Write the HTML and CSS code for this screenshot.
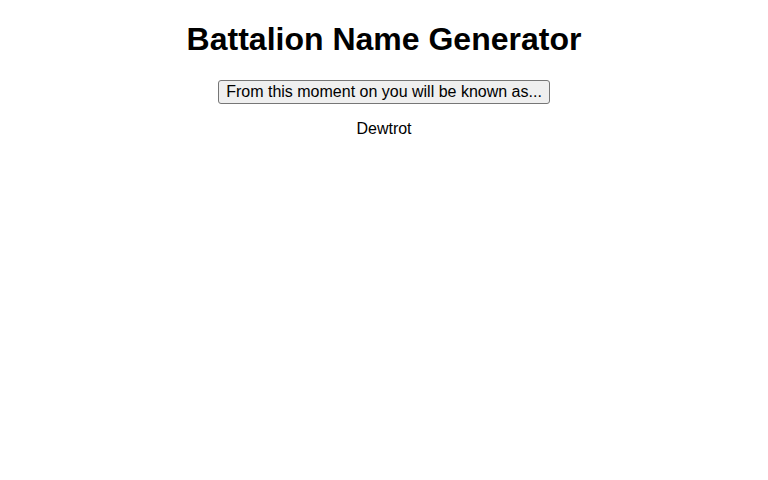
FILE: index.html
```html
<!DOCTYPE html>
<html>
  <head>
    <meta charset="utf-8">
    <title>Battalion Name Generator</title>
    <link rel="stylesheet" href="styles.css">
  </head>
<body>
	<h1 class="title">Battalion Name Generator</h1>
	<div class="actions">
		<button class="nameBtn" id="nameBtn">From this moment on you will be known as...</button>
	</div>
	<p class="name" id="name">Dewtrot</p>
</body>
</html>
```
FILE: styles.css
```css
body {
	margin: 0;
	font-family: "Liberation Sans", Arial, sans-serif;
	text-align: center;
	color: #000;
	background: #fff;
}
.title {
	font-size: 32px;
	margin: 21px 0;
}
.actions {
	padding-top: 1px;
}
.nameBtn {
	font-family: "Liberation Sans", Arial, sans-serif;
	font-size: 16px;
	height: 24px;
	padding: 1px 7px;
	color: #000;
	background: #efefef;
	border: 1px solid #767676;
	border-radius: 3px;
}
.name {
	font-size: 16px;
	margin: 16px 0;
}
```
